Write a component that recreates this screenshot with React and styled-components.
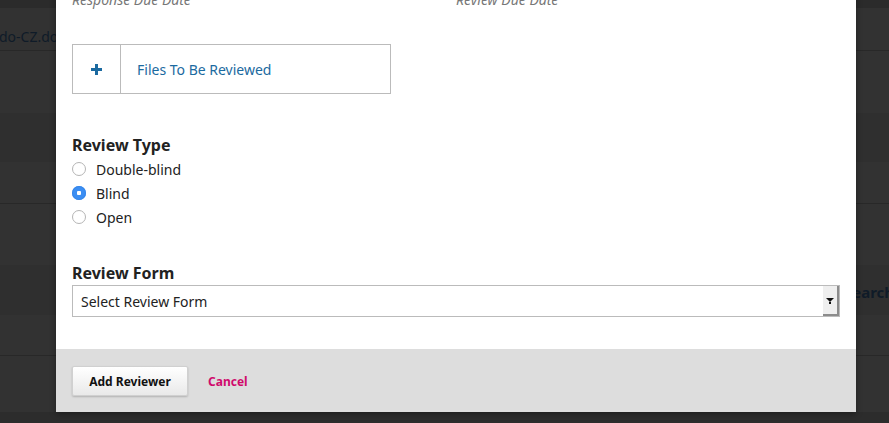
import React from "react";
import styled, { createGlobalStyle } from "styled-components";

const GlobalStyle = createGlobalStyle`
  html, body {
    margin: 0;
    padding: 0;
    background: #2c2c2c;
    overflow: hidden;
  }
  body {
    font-family: "Noto Sans", "Open Sans", sans-serif;
  }
`;

const rows = [
  { h: 8, shade: "#2b2b2b" },
  { h: 42, shade: "#323232", text: "do-CZ.docx", side: "left", top: 19 },
  { h: 63, shade: "#323232", line: true },
  { h: 49, shade: "#2f2f2f" },
  { h: 41, shade: "#323232" },
  { h: 62, shade: "#323232", line: true },
  { h: 50, shade: "#2f2f2f", text: "Search", side: "right", top: 17 },
  { h: 40, shade: "#323232" },
  { h: 57, shade: "#323232", line: true },
];

const App = () => {
  return (
    <>
      <GlobalStyle />
      <Screen>
        <Backdrop>
          {rows.map((r, i) => (
            <BackRow key={i} $h={r.h} $shade={r.shade} $line={r.line}>
              {r.text && (
                <BackText $side={r.side} $top={r.top} $bold={r.side === "right"}>
                  {r.text}
                </BackText>
              )}
            </BackRow>
          ))}
        </Backdrop>

        <Modal>
          <Body>
            <DueRow>
              <SubLabel>Response Due Date</SubLabel>
              <SubLabel>Review Due Date</SubLabel>
            </DueRow>

            <FilesBox>
              <PlusCell>
                <svg width="11" height="11" viewBox="0 0 11 11">
                  <rect x="4" y="0" width="3" height="11" fill="#1b6aa0" />
                  <rect x="0" y="4" width="11" height="3" fill="#1b6aa0" />
                </svg>
              </PlusCell>
              <FilesLabel>Files To Be Reviewed</FilesLabel>
            </FilesBox>

            <Heading $gap={41}>Review Type</Heading>
            <RadioList>
              <RadioRow>
                <Radio />
                <span>Double-blind</span>
              </RadioRow>
              <RadioRow>
                <Radio $checked />
                <span>Blind</span>
              </RadioRow>
              <RadioRow>
                <Radio />
                <span>Open</span>
              </RadioRow>
            </RadioList>

            <Heading $gap={34}>Review Form</Heading>
            <SelectBox>
              <SelectText>Select Review Form</SelectText>
              <SelectArrow>
                <svg width="8" height="7" viewBox="0 0 8 7">
                  <polygon points="0,1 8,1 4,5" fill="#111" />
                  <rect x="3" y="5" width="2" height="2" fill="#111" />
                </svg>
              </SelectArrow>
            </SelectBox>
          </Body>

          <Footer>
            <PrimaryButton>Add Reviewer</PrimaryButton>
            <CancelLink>Cancel</CancelLink>
          </Footer>
        </Modal>
      </Screen>
    </>
  );
};

const Screen = styled.div`
  position: relative;
  width: 889px;
  height: 423px;
  overflow: hidden;
`;

const Backdrop = styled.div`
  display: flex;
  flex-direction: column;
  width: 100%;
`;

const BackRow = styled.div`
  position: relative;
  height: ${(p) => p.$h}px;
  background: ${(p) => p.$shade};
  border-top: ${(p) => (p.$line ? "1px solid #282828" : "none")};
  box-sizing: border-box;
`;

const BackText = styled.div`
  position: absolute;
  top: ${(p) => p.$top}px;
  ${(p) => (p.$side === "left" ? "left: -1px;" : "left: 844px;")}
  font-size: ${(p) => (p.$bold ? 15 : 14)}px;
  font-weight: ${(p) => (p.$bold ? 700 : 400)};
  color: #0f1b28;
  white-space: nowrap;
`;

const Modal = styled.div`
  position: absolute;
  left: 56px;
  top: -26px;
  width: 800px;
  background: #fff;
  border-radius: 0 0 2px 2px;
  box-shadow: 0 2px 6px rgba(0, 0, 0, 0.35);
  display: flex;
  flex-direction: column;
`;

const Body = styled.div`
  padding: 16px 16px 32px;
  display: flex;
  flex-direction: column;
`;

const DueRow = styled.div`
  display: grid;
  grid-template-columns: 1fr 1fr;
`;

const SubLabel = styled.div`
  font-size: 14px;
  line-height: 20px;
  font-style: italic;
  color: #777;
`;

const FilesBox = styled.div`
  margin-top: 34px;
  width: 319px;
  height: 50px;
  box-sizing: border-box;
  border: 1px solid #bbb;
  display: flex;
  align-items: stretch;
`;

const PlusCell = styled.div`
  width: 47px;
  border-right: 1px solid #bbb;
  display: flex;
  align-items: center;
  justify-content: center;
  padding-top: 1px;
`;

const FilesLabel = styled.div`
  display: flex;
  align-items: center;
  padding-left: 16px;
  font-size: 14px;
  color: #1b6aa0;
`;

const Heading = styled.div`
  margin-top: ${(p) => p.$gap}px;
  font-size: 16px;
  line-height: 20px;
  font-weight: 700;
  color: #222;
`;

const RadioList = styled.div`
  margin-top: 2px;
  display: flex;
  flex-direction: column;
`;

const RadioRow = styled.div`
  height: 24px;
  display: flex;
  align-items: center;
  gap: 10px;
  font-size: 14px;
  color: #222;
`;

const Radio = styled.span`
  width: 14px;
  height: 14px;
  box-sizing: border-box;
  border-radius: 50%;
  border: ${(p) => (p.$checked ? "none" : "1px solid #b5b5b5")};
  background: ${(p) =>
    p.$checked
      ? "radial-gradient(circle, #fff 0 2px, #3b8ef3 2.5px)"
      : "#fff"};
  box-shadow: ${(p) => (p.$checked ? "inset 0 0 0 1px #3787ea" : "none")};
`;

const SelectBox = styled.div`
  margin-top: 2px;
  height: 32px;
  box-sizing: border-box;
  border: 1px solid #bbb;
  display: flex;
  align-items: stretch;
  justify-content: space-between;
`;

const SelectText = styled.div`
  display: flex;
  align-items: center;
  padding-left: 8px;
  font-size: 14px;
  color: #222;
`;

const SelectArrow = styled.div`
  width: 14px;
  background: #efefef;
  border-right: 2px solid #8c8c8c;
  border-bottom: 2px solid #8c8c8c;
  display: flex;
  align-items: center;
  justify-content: center;
  padding-top: 1px;
`;

const Footer = styled.div`
  background: #dddddd;
  padding: 17px 16px 16px;
  display: flex;
  align-items: center;
  gap: 20px;
`;

const PrimaryButton = styled.button`
  width: 116px;
  height: 30px;
  border: 1px solid #d0d0d0;
  border-radius: 2px;
  background: linear-gradient(#ffffff, #e9e9e9);
  box-shadow: 0 1px 2px rgba(0, 0, 0, 0.2);
  font-family: "Noto Sans", sans-serif;
  font-size: 12px;
  font-weight: 700;
  color: #111;
  padding: 0;
`;

const CancelLink = styled.span`
  font-size: 12px;
  font-weight: 700;
  color: #d00a6c;
`;

export default App;
